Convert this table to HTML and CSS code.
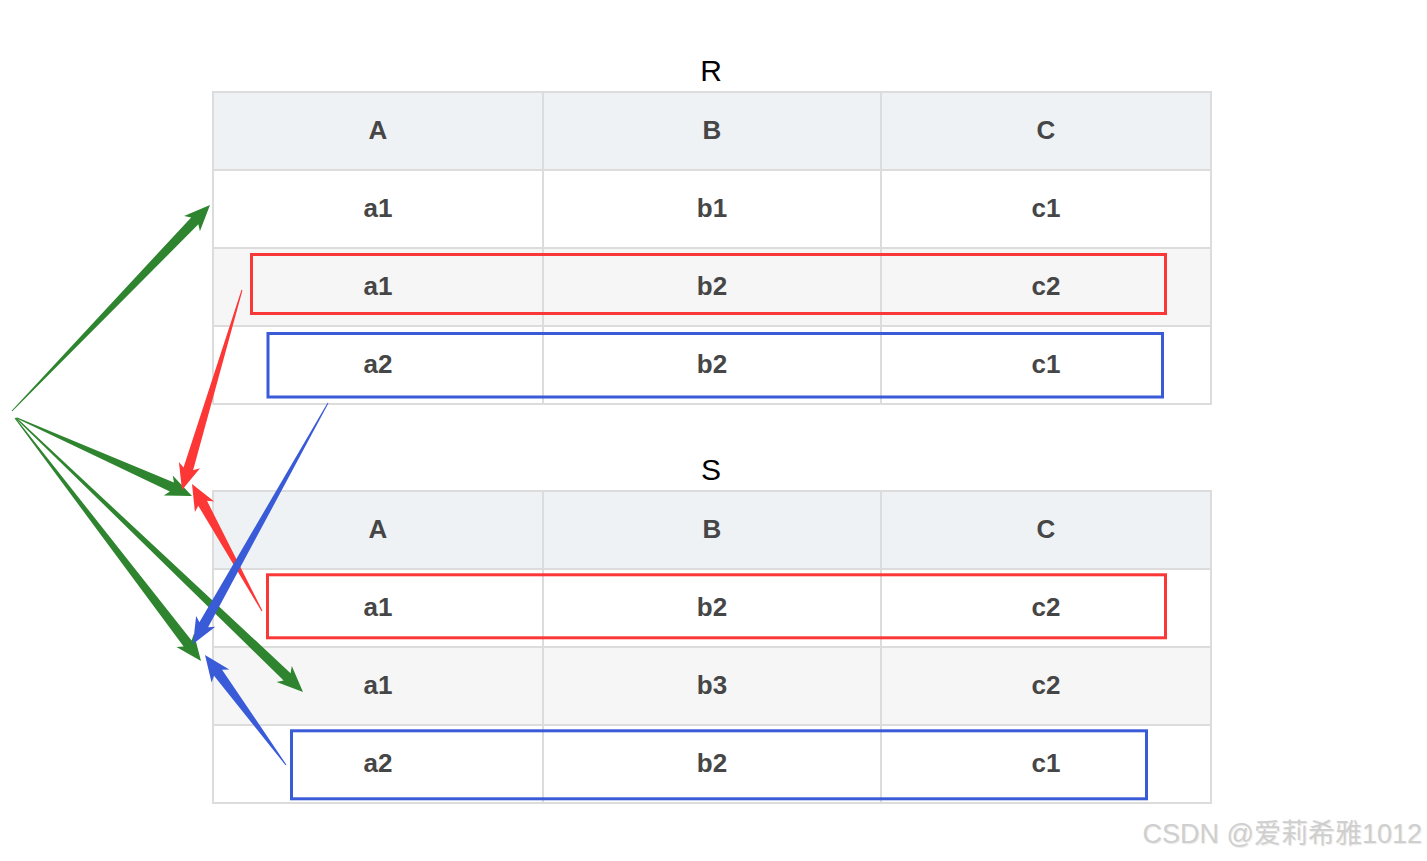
FILE: index.html
```html
<!DOCTYPE html>
<html lang="zh-CN">
<head>
<meta charset="utf-8">
<title>R and S</title>
<link rel="stylesheet" href="styles.css">
</head>
<body>
<div class="page">
  <section class="rel">
    <div class="rel-title">R</div>
    <table class="grid">
      <colgroup><col class="c1"><col class="c2"><col class="c3"></colgroup>
      <thead><tr><th>A</th><th>B</th><th>C</th></tr></thead>
      <tbody>
        <tr><td>a1</td><td>b1</td><td>c1</td></tr>
        <tr><td>a1</td><td>b2</td><td>c2</td></tr>
        <tr><td>a2</td><td>b2</td><td>c1</td></tr>
      </tbody>
    </table>
  </section>
  <section class="rel rel-second">
    <div class="rel-title">S</div>
    <table class="grid">
      <colgroup><col class="c1"><col class="c2"><col class="c3"></colgroup>
      <thead><tr><th>A</th><th>B</th><th>C</th></tr></thead>
      <tbody>
        <tr><td>a1</td><td>b2</td><td>c2</td></tr>
        <tr><td>a1</td><td>b3</td><td>c2</td></tr>
        <tr><td>a2</td><td>b2</td><td>c1</td></tr>
      </tbody>
    </table>
  </section>

  <svg class="overlay" width="1427" height="861" viewBox="0 0 1427 861" aria-hidden="true">
    <g class="box-red">
      <rect x="251.5" y="254.5" width="914" height="59"/>
      <rect x="267.5" y="574.8" width="898" height="63"/>
    </g>
    <g class="box-blue">
      <rect x="268" y="333.5" width="894.5" height="63.5"/>
      <rect x="291.5" y="730.8" width="855" height="68"/>
    </g>
    <g class="arrow-green">
      <polygon points="12.36,411.35 198.36,224.33 199.91,231.36 210,205 184.05,216.12 191.15,217.40 11.64,410.65"/>
      <polygon points="16.76,418.55 169.88,491.62 163.78,495.46 192,496 172.74,475.38 173.95,482.49 17.24,417.45"/>
      <polygon points="14.52,418.36 183.66,646.57 176.47,647.04 201,661 193.93,633.66 191.60,640.49 15.48,417.64"/>
      <polygon points="15.59,418.43 283.64,680.42 276.60,681.99 303,692 291.80,666.09 290.55,673.19 16.41,417.57"/>
    </g>
    <g class="arrow-red">
      <polygon points="241.52,289.86 183.52,467.49 178.92,461.93 182,490 200.0,468.25 193.10,470.36 242.48,290.14"/>
      <polygon points="262.44,610.76 207.01,500.86 214.20,501.46 192,484 194.92,512.08 198.25,505.69 261.56,611.24"/>
    </g>
    <g class="arrow-blue">
      <polygon points="327.56,402.76 199.40,622.35 196.12,615.92 193,644 215.32,626.68 208.13,627.24 328.44,403.24"/>
      <polygon points="286.40,764.70 222.08,669.75 229.28,669.41 205,655 211.57,682.45 214.03,675.68 285.60,765.30"/>
    </g>
  </svg>

  <div class="watermark">CSDN @爱莉希雅1012</div>
</div>
</body>
</html>
```

FILE: styles.css
```css
html, body {
  margin: 0;
  padding: 0;
  background: #ffffff;
}

body {
  font-family: "Liberation Sans", Arial, "Noto Sans CJK SC", sans-serif;
}

.page {
  position: relative;
  width: 1427px;
  height: 861px;
  overflow: hidden;
  padding: 51px 0 0 212px;
  box-sizing: border-box;
}

.rel {
  width: 998px;
}

.rel-second {
  margin-top: 45px;
}

.rel-title {
  text-align: center;
  font-size: 30px;
  line-height: 40px;
  height: 40px;
  color: #000000;
}

.grid {
  width: 998px;
  table-layout: fixed;
  border-collapse: collapse;
  border: 2px solid #dcdcdc;
}

.grid col.c1 { width: 330px; }
.grid col.c2 { width: 338px; }
.grid col.c3 { width: 330px; }

.grid th,
.grid td {
  border: 2px solid #dcdcdc;
  height: 74px;
  padding: 0 0 2px 0;
  box-sizing: content-box;
  text-align: center;
  vertical-align: middle;
  font-weight: bold;
  font-size: 26px;
  color: #464646;
}

.grid thead th {
  background: #eff2f5;
}

.grid tbody tr:nth-child(even) td {
  background: #f6f6f6;
}

.grid tbody tr:nth-child(odd) td {
  background: #ffffff;
}

.overlay {
  position: absolute;
  left: 0;
  top: 0;
  pointer-events: none;
}

.box-red rect {
  fill: none;
  stroke: #fb3838;
  stroke-width: 3;
}

.box-blue rect {
  fill: none;
  stroke: #3a5bd8;
  stroke-width: 3;
}

.arrow-green polygon { fill: #2f852f; }
.arrow-red polygon { fill: #fd3636; }
.arrow-blue polygon { fill: #3a5bd8; }

.watermark {
  position: absolute;
  right: 5px;
  top: 817px;
  font-size: 27px;
  line-height: 34px;
  color: #cfcfcf;
  text-shadow: 1px 1px 1px #e8e8e8;
  white-space: nowrap;
}
```
